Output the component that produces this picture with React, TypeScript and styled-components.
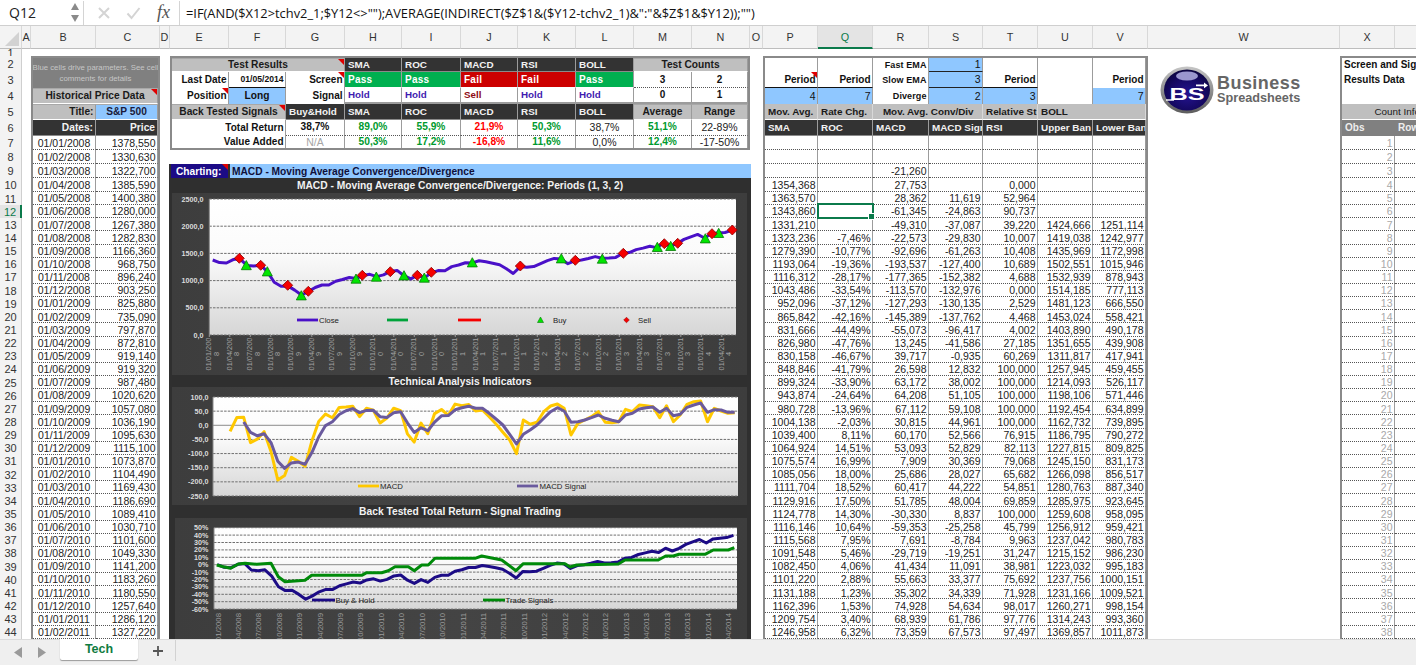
import React from 'react';
import styled, { createGlobalStyle, css } from 'styled-components';

const Global = createGlobalStyle`
  html, body { margin: 0; padding: 0; background: #fff; overflow: hidden; }
  * { box-sizing: border-box; }
`;

const FONT = `"Liberation Sans", Arial, sans-serif`;
const COLUMNS = ['A','B','C','D','E','F','G','H','I','J','K','L','M','N','O','P','Q','R','S','T','U','V','W','X','Y'];
const WIDTHS = [9,65,64,10,59,57,59,57,59,57,58,58,58,58,13,55,55,56,54,55,55,55,192,55,56];
const col = (c: string) => COLUMNS.indexOf(c) + 2;
const row = (n: number) => n + 1;

/* ---------- page frame ---------- */
const Page = styled.div`
  width: 1416px; height: 665px; display: flex; flex-direction: column; overflow: hidden; background: #fff;
  font-family: ${FONT}; color: #111;
`;
const FormulaBar = styled.div`
  height: 26px; flex: none; display: flex; align-items: center; background: #fff; border-bottom: 1px solid #cfcfcf;
`;
const NameBox = styled.div`
  width: 84px; height: 24px; flex: none; display: flex; align-items: center; justify-content: space-between;
  padding: 0 3px 0 9px; font: 14px "Open Sans", sans-serif; color: #222; border-right: 1px solid #d4d4d4;
`;
const Actions = styled.div`
  width: 96px; height: 24px; flex: none; display: flex; align-items: center; padding-left: 13px; gap: 15px;
  border-right: 1px solid #d4d4d4;
`;
const FxLabel = styled.span`
  font: italic 18px "Liberation Serif", serif; color: #555; margin-left: 1px; white-space: nowrap;
`;
const FormulaText = styled.div`
  padding-left: 6px; font: 12.85px "Open Sans", sans-serif; color: #111; white-space: nowrap;
`;
const Sheet = styled.div`
  flex: none; height: 613px; overflow: hidden; display: grid;
  grid-template-columns: 22px ${WIDTHS.map(w => w + 'px').join(' ')};
  grid-template-rows: 23px 7px repeat(5, 16px) repeat(4, 14px) repeat(34, 13.15px);
`;

/* ---------- headers ---------- */
const CornerCell = styled.div`
  grid-column: 1; grid-row: 1; background: #f3f3f3; border-bottom: 1px solid #bdbdbd; border-right: 1px solid #d8d8d8;
  display: flex; align-items: flex-end; justify-content: flex-end;
`;
const CornerMark = styled.span`
  width: 0; height: 0; border-style: solid; border-width: 0 0 14px 14px; margin: 0 2px 2px 0;
  border-color: transparent transparent #d2d2d2 transparent;
`;
const ColHead = styled.div<{ $c: number; $on?: boolean }>`
  grid-column: ${p => p.$c}; grid-row: 1; display: flex; align-items: center; justify-content: center;
  font-size: 10.8px; color: ${p => (p.$on ? '#0b7a4b' : '#333')}; background: ${p => (p.$on ? '#e4e4e4' : '#f3f3f3')};
  border-right: 1px solid #d8d8d8;
  border-bottom: ${p => (p.$on ? '2px solid #0b7a4b' : '1px solid #bdbdbd')};
`;
const RowHead = styled.div<{ $r: number; $on?: boolean }>`
  grid-column: 1; grid-row: ${p => p.$r}; display: flex; align-items: center; justify-content: center; overflow: hidden;
  font-size: 11px; color: ${p => (p.$on ? '#0b7a4b' : '#333')}; background: ${p => (p.$on ? '#e4e4e4' : '#f3f3f3')};
  border-right: ${p => (p.$on ? '2px solid #0b7a4b' : '1px solid #cfcfcf')};
`;

/* ---------- blocks ---------- */
const Block = styled.div<{ $from: string; $to: string; $r1: number; $r2: number; $open?: boolean }>`
  grid-column: ${p => col(p.$from)} / ${p => col(p.$to) + 1};
  grid-row: ${p => row(p.$r1)} / ${p => row(p.$r2) + 1};
  display: grid; grid-template-columns: subgrid; grid-template-rows: subgrid;
  border: 2px solid #8a8a8a; ${p => p.$open && 'border-bottom: none;'}
`;
const OpenBlock = styled(Block)`
  border-right: none;
`;

/* ---------- cells ---------- */
type CellProps = { $span?: number; $rows?: number; $a?: 'left' | 'center' | 'right' };
const Cell = styled.div<CellProps>`
  grid-column: span ${p => p.$span ?? 1}; grid-row: span ${p => p.$rows ?? 1};
  position: relative; min-width: 0; overflow: hidden; white-space: nowrap; display: flex; align-items: center;
  padding: 0 1.5px; font-size: 10.5px; line-height: 1;
  justify-content: ${p => (p.$a === 'center' ? 'center' : p.$a === 'left' ? 'flex-start' : 'flex-end')};
  border-right: 1px solid #9c9c9c;
`;
const Note = styled(Cell)`
  background: #808080; color: #c6c6c6; font-size: 7.8px; line-height: 11px; text-align: center;
  justify-content: center; padding: 0; border-right: none;
`;
const Band = styled(Cell)`
  background: #bfbfbf; font-weight: 700; font-size: 10.2px; color: #1a1a1a; border-bottom: 1px solid #fff; border-top: 1px solid #a8a8a8;
`;
const BlueBand = styled(Cell)`
  background: #8fc7ff; font-weight: 700; font-size: 10.2px; color: #1a1a3a; border-top: 1px solid #a8a8a8; border-bottom: 1px solid #fff;
`;
const DarkHead = styled(Cell)`
  background: #333; color: #f2f2f2; font-weight: 700; font-size: 9.9px; padding: 1px 0 0 3px; border-bottom: 1px solid #8a8a8a;
`;
const DarkHeadRight = styled(DarkHead)`
  padding: 1px 2px 0 0; font-size: 10.2px;
`;
const LabelCell = styled(Cell)`
  font-weight: 700; font-size: 10px; background: #fff;
`;
const LabelTight = styled(LabelCell)`
  font-size: 9px; letter-spacing: .1px;
`;
const DateValue = styled(Cell)`
  font-size: 8.6px; font-weight: 700; border-bottom: 1px solid #111;
`;
const ParamCell = styled(Cell)<{ $bold?: boolean; $under?: boolean }>`
  background: #8fc7ff; ${p => p.$bold && 'font-weight: 700; font-size: 10.2px;'}
  ${p => p.$under && 'border-bottom: 1px solid #222;'}
`;
const PeriodLabel = styled(LabelCell)`
  border-bottom: 1px solid #111;
`;
const Blank = styled(Cell)<{ $under?: boolean }>`
  background: #fff; ${p => p.$under && 'border-bottom: 1px dotted #555;'}
`;
const Status = styled(Cell)<{ $pass: boolean }>`
  background: ${p => (p.$pass ? '#00b050' : '#cc0000')}; color: #fff; font-weight: 700; font-size: 10px; letter-spacing: .25px;
  justify-content: flex-start; padding-left: 3px; border-bottom: 1px solid #fff;
`;
const SignalText = styled(Cell)<{ $sell?: boolean }>`
  color: ${p => (p.$sell ? '#8f0a14' : '#3f1cb0')}; font-weight: 700; font-size: 9.8px; justify-content: flex-start; padding-left: 3px;
  border-bottom: 2px solid #9c9c9c;
`;
const CountCell = styled(Cell)<{ $rule?: boolean }>`
  font-weight: 700; font-size: 10px; justify-content: center;
  ${p => (p.$rule ? 'border-bottom: 1px dotted #555;' : 'border-bottom: 2px solid #9c9c9c;')}
`;
const Result = styled(Cell)<{ $tone: 'plus' | 'minus' | 'flat' | 'mute' | 'strong'; $rule?: boolean }>`
  justify-content: center;
  ${p => p.$rule && 'border-bottom: 1px dotted #555;'}
  ${p => p.$tone === 'plus' && css`color: #009a2e; font-weight: 700; font-size: 10.2px;`}
  ${p => p.$tone === 'minus' && css`color: #f00; font-weight: 700; font-size: 10.2px;`}
  ${p => p.$tone === 'flat' && css`color: #222;`}
  ${p => p.$tone === 'mute' && css`color: #a6a6a6;`}
  ${p => p.$tone === 'strong' && css`color: #111; font-weight: 700; font-size: 10.2px;`}
`;
const DataCell = styled(Cell)`
  border-bottom: 1px dotted #555; color: #222; padding-top: 1px;
`;
const GreyHead = styled(Cell)`
  background: #bfbfbf; font-weight: 700; font-size: 9.9px; color: #1a1a1a; justify-content: flex-start; padding-left: 3px; border-bottom: 1px solid #fff;
  border-right: 1px solid #d8d8d8;
`;
const GreyHeadCentered = styled(GreyHead)`
  justify-content: center;
`;
const GreyHeadPlain = styled(GreyHead)`
  border-right: none; font-weight: 400; justify-content: center;
`;
const MidHead = styled(Cell)`
  background: #808080; color: #eee; font-weight: 700; font-size: 10px; justify-content: flex-start; padding-left: 3px; border-right: none;
`;
const SideTitle = styled(Cell)`
  font-weight: 700; font-size: 10px; justify-content: flex-start; padding-left: 2px; border-right: none; overflow: visible;
`;
const ObsCell = styled(Cell)`
  border-bottom: 1px dotted #555; color: #a8a8a8; padding-top: 1px;
`;
const Flag = styled.span`
  position: absolute; top: 0; right: 0; width: 0; height: 0; border-style: solid; border-width: 0 6px 6px 0;
  border-color: transparent #e00000 transparent transparent;
`;
const SelectedCell = styled(DataCell)`
  overflow: visible; z-index: 3;
`;
const SelectionBox = styled.span`
  position: absolute; left: -1px; top: -2px; right: -2px; bottom: -2px; border: 2px solid #0b7a4b;
`;
const SelectionHandle = styled.span`
  position: absolute; right: -3px; bottom: -3px; width: 5px; height: 5px; background: #0b7a4b; border: 1px solid #fff;
  box-sizing: content-box;
`;

/* ---------- logo ---------- */
const LogoCell = styled.div`
  grid-column: ${col('W')}; grid-row: ${row(2)} / ${row(9)};
  display: flex; align-items: flex-start; gap: 3px; padding: 10px 0 0 12px;
`;
const LogoWords = styled.div`
  display: flex; flex-direction: column; padding-top: 9px; color: #666; font-weight: 700;
`;
const LogoBig = styled.span`
  font-size: 18px; line-height: 17px; letter-spacing: .45px;
`;
const LogoSmall = styled.span`
  font-size: 12.7px; line-height: 12px;
`;

/* ---------- chart block ---------- */
const ChartBlock = styled.div`
  grid-column: ${col('E')} / ${col('N') + 1}; grid-row: ${row(9)} / ${row(44) + 1};
  background: #2f2f2f; margin: 0 -1px; display: flex; flex-direction: column; overflow: hidden;
`;
const ChartingBar = styled.div`
  height: 14px; flex: none; display: flex; gap: 2px; padding-left: 2px; align-items: stretch; font-weight: 700; font-size: 10.2px;
  background: #2f2f2f;
`;
const ChartingTag = styled.div`
  position: relative; width: 57px; background: #1c0b86; color: #fff; display: flex; align-items: center; padding-left: 5px;
`;
const ChartingName = styled.div`
  flex: 1; background: #8fc7ff; color: #10103a; display: flex; align-items: center; padding-left: 2px;
`;
const ChartTitle = styled.div<{ $h: number }>`
  height: ${p => p.$h}px; flex: none; display: flex; align-items: center; justify-content: center;
  color: #f2f2f2; font-weight: 700; font-size: 10.25px;
`;
const ChartPanel = styled.div<{ $h: number; $left: number }>`
  height: ${p => p.$h}px; flex: none; margin: 0 4px 0 ${p => p.$left}px; background: linear-gradient(90deg, #3d3d3d, #444 50%, #3d3d3d);
`;
const ChartSvg = styled.svg`
  display: block; width: 100%; height: 100%; font-family: ${FONT};
`;

/* ---------- tab bar ---------- */
const TabBar = styled.div`
  flex: 1; display: flex; align-items: flex-start; background: #efefef; border-top: 1px solid #dcdcdc;
`;
const Nav = styled.div`
  width: 60px; height: 25px; flex: none; display: flex; align-items: center; gap: 14px; padding-left: 14px;
`;
const SheetTab = styled.div`
  width: 78px; height: 21px; flex: none; margin-top: -1px; background: #fff; color: #107c41; font-weight: 700; font-size: 12.5px;
  display: flex; align-items: center; justify-content: center; border-radius: 0 0 2px 2px;
  box-shadow: 0 1px 1px #9a9a9a; padding-bottom: 2px;
`;
const AddTab = styled.div`
  width: 38px; height: 21px; flex: none; display: flex; align-items: center; justify-content: center;
  border-right: 1px solid #d2d2d2; padding-left: 2px;
`;

/* ---------- data ---------- */
const prices = ['1378,550','1330,630','1322,700','1385,590','1400,380','1280,000','1267,380','1282,830','1166,360','968,750','896,240','903,250','825,880','735,090','797,870','872,810','919,140','919,320','987,480','1020,620','1057,080','1036,190','1095,630','1115,100','1073,870','1104,490','1169,430','1186,690','1089,410','1030,710','1101,600','1049,330','1141,200','1183,260','1180,550','1257,640','1286,120','1327,220'];
const laterPrices = [1325.83,1363.61,1345.2,1320.64,1292.28,1218.89,1131.42,1253.3,1246.96,1257.6,1312.41,1365.68,1408.47,1397.91,1310.33,1362.16,1379.32,1406.58,1440.67,1412.16,1416.18,1426.19,1498.11,1514.68,1569.19,1597.57,1630.74,1606.28,1685.73,1632.97,1681.55,1756.54,1805.81,1848.36,1782.59,1859.45,1872.34,1883.95,1923.57];
const num = (s: string) => parseFloat(s.replace(',', '.'));
const closes = [...prices.map(num), ...laterPrices];

const dates = prices.map((_, i) => {
  const y = 2008 + Math.floor(i / 12);
  const m = String((i % 12) + 1).padStart(2, '0');
  return `01/${m}/${y}`;
});

const table: string[][] = [
  ['','','','','','',''],
  ['','','','','','',''],
  ['','','-21,260','','','',''],
  ['1354,368','','27,753','','0,000','',''],
  ['1363,570','','28,362','11,619','52,964','',''],
  ['1343,860','','-61,345','-24,863','90,737','',''],
  ['1331,210','','-49,310','-37,087','39,220','1424,666','1251,114'],
  ['1323,236','-7,46%','-22,573','-29,830','10,007','1419,038','1242,977'],
  ['1279,390','-10,77%','-92,696','-61,263','10,408','1435,969','1172,998'],
  ['1193,064','-19,36%','-193,537','-127,400','10,689','1502,551','1015,946'],
  ['1116,312','-28,17%','-177,365','-152,382','4,688','1532,939','878,943'],
  ['1043,486','-33,54%','-113,570','-132,976','0,000','1514,185','777,113'],
  ['952,096','-37,12%','-127,293','-130,135','2,529','1481,123','666,550'],
  ['865,842','-42,16%','-145,389','-137,762','4,468','1453,024','558,421'],
  ['831,666','-44,49%','-55,073','-96,417','4,002','1403,890','490,178'],
  ['826,980','-47,76%','13,245','-41,586','27,185','1351,655','439,908'],
  ['830,158','-46,67%','39,717','-0,935','60,269','1311,817','417,941'],
  ['848,846','-41,79%','26,598','12,832','100,000','1257,945','459,455'],
  ['899,324','-33,90%','63,172','38,002','100,000','1214,093','526,117'],
  ['943,874','-24,64%','64,208','51,105','100,000','1198,106','571,446'],
  ['980,728','-13,96%','67,112','59,108','100,000','1192,454','634,899'],
  ['1004,138','-2,03%','30,815','44,961','100,000','1162,732','739,895'],
  ['1039,400','8,11%','60,170','52,566','76,915','1186,795','790,272'],
  ['1064,924','14,51%','53,093','52,829','82,113','1227,815','809,825'],
  ['1075,574','16,99%','7,909','30,369','79,068','1245,150','831,173'],
  ['1085,056','18,00%','25,686','28,027','65,682','1266,098','856,517'],
  ['1111,704','18,52%','60,417','44,222','54,851','1280,763','887,340'],
  ['1129,916','17,50%','51,785','48,004','69,859','1285,975','923,645'],
  ['1124,778','14,30%','-30,330','8,837','100,000','1259,608','958,095'],
  ['1116,146','10,64%','-59,353','-25,258','45,799','1256,912','959,421'],
  ['1115,568','7,95%','7,691','-8,784','9,963','1237,042','980,783'],
  ['1091,548','5,46%','-29,719','-19,251','31,247','1215,152','986,230'],
  ['1082,450','4,06%','41,434','11,091','38,981','1223,032','995,183'],
  ['1101,220','2,88%','55,663','33,377','75,692','1237,756','1000,151'],
  ['1131,188','1,23%','35,302','34,339','71,928','1231,166','1009,521'],
  ['1162,396','1,53%','74,928','54,634','98,017','1260,271','998,154'],
  ['1209,754','3,40%','68,939','61,786','97,776','1314,243','993,360'],
  ['1246,958','6,32%','73,359','67,573','97,497','1369,857','1011,873'],
];

const macdLater = [108,105,125,147,172,195,236,135,148,142,110,93,87,100,180,145,135,125,110,142,143,140,103,110,90,92,95,128,92,140,120,88,80,78,140,100,108,115,113];
const signalLater = [100,100,115,132,150,178,207,178,165,150,130,110,98,108,142,140,135,128,120,130,136,140,120,115,102,98,96,112,100,122,118,97,90,84,112,104,105,112,112];

const sells: [number, number][] = [[239.3,258.3],[260.7,265.3],[287.7,285.3],[308.3,291.3],[362.3,275.3],[390.3,271.7],[417.3,275.3],[431.3,272.3],[520.3,266],[575.3,260.3],[623.3,253.3],[664.3,243.7],[677.7,243.3],[712,233.7],[732.3,230]];
const buys: [number, number][] = [[246.3,265.5],[267.3,271.7],[301.3,295.7],[356,279],[376.3,277],[404,275.7],[424.3,278],[472.3,262.7],[561.3,258.7],[602.3,259],[657.3,247.3],[670.7,246.3],[705.3,238.7],[718.7,233.3]];

const green3A: [number, number][] = [[155,180],[175,185],[197,190],[220,177],[240,175],[275,178],[318,175],[340,215],[360,230],[420,226],[440,211],[590,211],[605,203],[650,203],[670,197],[690,185],[730,185],[748,197],[770,180],[790,180],[810,160]];
const green3B: [number, number][] = [[0,160],[60,160],[80,153],[140,165],[183,197],[205,176],[330,176],[345,186],[365,180],[490,177],[510,165],[610,165],[632,153],[655,153],[672,148],[750,148],[775,135],[820,135],[838,128]];

const ticks = Array.from({ length: 26 }, (_, i) => {
  const total = i * 3;
  const y = 2008 + Math.floor(total / 12);
  const m = String((total % 12) + 1).padStart(2, '0');
  return { m, y: String(y) };
});

const line = (pts: [number, number][]) => pts.map(p => `${p[0].toFixed(1)},${p[1].toFixed(1)}`).join(' ');

/* ---------- drawings ---------- */
function Plot({ id, x, y, w, h }: { id: string; x: number; y: number; w: number; h: number }) {
  return (
    <>
      <defs>
        <linearGradient id={id} x1="0" y1="0" x2="0" y2="1">
          <stop offset="0" stopColor="#fff" />
          <stop offset=".4" stopColor="#fbfbfb" />
          <stop offset="1" stopColor="#d6d6d6" />
        </linearGradient>
      </defs>
      <rect x={x} y={y} width={w} height={h} fill={`url(#${id})`} />
    </>
  );
}

const AXIS = { fill: '#dcdcdc', fontSize: 7.2, fontWeight: 700 } as const;
const LEGEND = { fill: '#222', fontSize: 7.8 } as const;
const GRID = { stroke: '#6f6f6f', strokeWidth: 1, strokeDasharray: '2.5 1.2' } as const;

function PriceChart() {
  const X0 = 209.3, X1 = 736, T = 199, B = 335;
  const pts = closes.map((c, i) => [X0 + (i + 0.5) * 6.83, B - (c / 2500) * 136] as [number, number]);
  const labels = ['2500,0','2000,0','1500,0','1000,0','500,0','0,0'];
  return (
    <ChartSvg viewBox="172 193 575 182">
      <Plot id="p1" x={X0} y={T} w={X1 - X0} h={B - T} />
      {labels.map((l, i) => {
        const y = T + (i * (B - T)) / 5;
        return (
          <g key={l}>
            <line x1={X0} x2={X1} y1={y} y2={y} {...GRID} />
            <text x={203.5} y={y + 2.5} textAnchor="end" {...AXIS}>{l}</text>
          </g>
        );
      })}
      <line x1={X0} x2={X0} y1={T} y2={B} stroke="#8a8a8a" />
      {ticks.map((t, i) => {
        const x = X0 + i * 20.5;
        return (
          <g key={i} fill="#a4a4a4" fontSize={7.4}>
            <line x1={x} x2={x} y1={B} y2={B + 2} stroke="#999" />
            <text transform={`rotate(-90 ${x + 1.8} 354)`} x={x + 1.8} y={354} textAnchor="middle">{`01/${t.m}/${t.y.slice(0, 3)}`}</text>
            <text transform={`rotate(-90 ${x + 9.5} 354)`} x={x + 9.5} y={354} textAnchor="middle">{t.y.slice(3)}</text>
          </g>
        );
      })}
      <polyline points={line(pts)} fill="none" stroke="#4a10c8" strokeWidth={3} strokeLinejoin="round" />
      {buys.map(([x, y], i) => (
        <polygon key={i} points={`${x},${y - 5} ${x + 5},${y + 4.2} ${x - 5},${y + 4.2}`} fill="#00e600" stroke="#067a06" strokeWidth={.8} />
      ))}
      {sells.map(([x, y], i) => (
        <polygon key={i} points={`${x},${y - 5} ${x + 5},${y} ${x},${y + 5} ${x - 5},${y}`} fill="#f50000" stroke="#8a0000" strokeWidth={.8} />
      ))}
      <line x1={297} x2={318} y1={320} y2={320} stroke="#4a10c8" strokeWidth={2.8} />
      <text x={319} y={323} {...LEGEND}>Close</text>
      <line x1={387} x2={408} y1={320} y2={320} stroke="#00a33a" strokeWidth={2.8} />
      <line x1={458} x2={481} y1={320} y2={320} stroke="#f50000" strokeWidth={2.8} />
      <polygon points="540.5,317 543.5,322.5 537.5,322.5" fill="#00e600" stroke="#067a06" strokeWidth={.6} />
      <text x={553} y={323} {...LEGEND}>Buy</text>
      <polygon points="626.5,317.2 629.3,320 626.5,322.8 623.7,320" fill="#f50000" stroke="#8a0000" strokeWidth={.5} />
      <text x={638} y={323} {...LEGEND}>Sell</text>
    </ChartSvg>
  );
}

function MacdChart() {
  const X0 = 213, X1 = 738, T = 397, B = 496;
  const toY = (v: number) => T + ((100 - v) * (B - T)) / 350;
  const toX = (i: number) => X0 + (i + 0.5) * 6.82;
  const macd: [number, number][] = [];
  const signal: [number, number][] = [];
  table.forEach((r, i) => {
    if (r[2]) macd.push([toX(i), toY(num(r[2]))]);
    if (r[3]) signal.push([toX(i), toY(num(r[3]))]);
  });
  macdLater.forEach((z, i) => macd.push([toX(i + 38), 375 + z / 3]));
  signalLater.forEach((z, i) => signal.push([toX(i + 38), 375 + z / 3]));
  const labels = [100, 50, 0, -50, -100, -150, -200, -250];
  return (
    <ChartSvg viewBox="172 387 575 118">
      <Plot id="p2" x={X0} y={T} w={X1 - X0} h={B - T} />
      {labels.map(l => {
        const y = toY(l);
        return (
          <g key={l}>
            {l === 0
              ? <line x1={X0} x2={X1} y1={y} y2={y} stroke="#8a8a8a" strokeWidth={1} />
              : <line x1={X0} x2={X1} y1={y} y2={y} {...GRID} />}
            <text x={208.5} y={y + 2.5} textAnchor="end" {...AXIS}>{`${l},0`}</text>
          </g>
        );
      })}
      <line x1={X0} x2={X0} y1={T} y2={B} stroke="#8a8a8a" />
      <polyline points={line(macd)} fill="none" stroke="#ffc800" strokeWidth={3} strokeLinejoin="round" />
      <polyline points={line(signal)} fill="none" stroke="#6a5a9e" strokeWidth={3} strokeLinejoin="round" />
      <line x1={358} x2={379} y1={486} y2={486} stroke="#ffc800" strokeWidth={2.8} />
      <text x={380} y={489} {...LEGEND}>MACD</text>
      <line x1={517} x2={538} y1={486} y2={486} stroke="#6a5a9e" strokeWidth={2.8} />
      <text x={539.5} y={489} {...LEGEND}>MACD Signal</text>
    </ChartSvg>
  );
}

function ReturnChart() {
  const X0 = 214, X1 = 737, T = 527.7, STEP = 7.4;
  const zero = T + 5 * STEP;
  const blue = closes.map((c, i) => [X0 + (i + 0.5) * 6.79, zero - (c / 1378.55 - 1) * 74] as [number, number]);
  const green: [number, number][] = [
    ...green3A.map(([x, y]) => [165 + x / 3, 505 + y / 3] as [number, number]),
    ...green3B.map(([x, y]) => [455 + x / 3, 505 + y / 3] as [number, number]),
  ];
  const labels = [50, 40, 30, 20, 10, 0, -10, -20, -30, -40, -50, -60];
  return (
    <ChartSvg viewBox="175 518 572 150">
      <Plot id="p3" x={X0} y={T} w={X1 - X0} h={11 * STEP} />
      {labels.map((l, i) => {
        const y = T + i * STEP;
        return (
          <g key={l}>
            {l === 0
              ? <line x1={X0} x2={X1} y1={y} y2={y} stroke="#8a8a8a" strokeWidth={1} />
              : <line x1={X0} x2={X1} y1={y} y2={y} {...GRID} />}
            <text x={208.5} y={y + 2.5} textAnchor="end" {...AXIS}>{`${l}%`}</text>
          </g>
        );
      })}
      <line x1={X0} x2={X0} y1={T} y2={T + 11 * STEP} stroke="#8a8a8a" />
      {ticks.map((t, i) => {
        const x = 220.5 + i * 20.42;
        return <text key={i} transform={`rotate(-90 ${x} 613)`} x={x} y={613} textAnchor="end" fill="#9c9c9c" fontSize={7.8}>{`01/${t.m}/${t.y}`}</text>;
      })}
      <polyline points={line(blue)} fill="none" stroke="#1c0b86" strokeWidth={3} strokeLinejoin="round" />
      <polyline points={line(green)} fill="none" stroke="#008a0a" strokeWidth={3} strokeLinejoin="round" />
      <line x1={312} x2={335} y1={600} y2={600} stroke="#1c0b86" strokeWidth={2.8} />
      <text x={335.5} y={603} {...LEGEND}>Buy &amp; Hold</text>
      <line x1={483} x2={505} y1={600} y2={600} stroke="#008a0a" strokeWidth={2.8} />
      <text x={505.5} y={603} {...LEGEND}>Trade Signals</text>
    </ChartSvg>
  );
}

function Logo() {
  return (
    <svg width="54" height="48" viewBox="0 0 54 48">
      <defs>
        <radialGradient id="orb" cx=".5" cy=".6" r=".6">
          <stop offset="0" stopColor="#241491" />
          <stop offset=".7" stopColor="#14085f" />
          <stop offset="1" stopColor="#0c0640" />
        </radialGradient>
        <linearGradient id="ring" x1="0" y1="0" x2="0" y2="1">
          <stop offset="0" stopColor="#c6c6c6" />
          <stop offset="1" stopColor="#5c5c5c" />
        </linearGradient>
      </defs>
      <ellipse cx="27" cy="24" rx="26.5" ry="23.5" fill="url(#ring)" />
      <ellipse cx="27" cy="24" rx="23" ry="20.5" fill="url(#orb)" />
      <ellipse cx="27" cy="10" rx="11" ry="4.5" fill="#9a97cf" />
      <text x="27" y="34" textAnchor="middle" fontFamily={FONT} fontSize="17" fontWeight="700" fill="#fff" textLength="35" lengthAdjust="spacingAndGlyphs">BS</text>
      <path d="M36 18.5h8v-2l4 2.9-4 2.9v-2h-8z" fill="#fff" />
      <path d="M6 34h8" stroke="#fff" strokeWidth="1.4" />
    </svg>
  );
}

const Tri = ({ up }: { up: boolean }) => (
  <svg width="10" height="9" viewBox="0 0 10 9"><path d={up ? 'M5 1l4 7H1z' : 'M5 8L1 1h8z'} fill="#8a8a8a" /></svg>
);

const Stepper = styled.div`
  display: flex; flex-direction: column; gap: 3px;
`;

const App = () => {
  const pct = [
    { t: 'Total Return', v: ['89,0%','55,9%','21,9%','50,3%','38,7%'], tone: ['plus','plus','minus','plus','flat'] },
    { t: 'Value Added', v: ['50,3%','17,2%','-16,8%','11,6%','0,0%'], tone: ['plus','plus','minus','plus','flat'] },
  ] as const;
  return (
    <Page>
      <Global />
      <FormulaBar>
        <NameBox>
          Q12
          <Stepper><Tri up /><Tri up={false} /></Stepper>
        </NameBox>
        <Actions>
          <svg width="14" height="14" viewBox="0 0 14 14"><path d="M2 2l10 10M12 2L2 12" stroke="#d4d4d4" strokeWidth="2" /></svg>
          <svg width="15" height="14" viewBox="0 0 15 14"><path d="M1.5 7.5l4 4.5 8-10" fill="none" stroke="#d4d4d4" strokeWidth="2" /></svg>
          <FxLabel>fx</FxLabel>
        </Actions>
        <FormulaText>{'=IF(AND($X12>tchv2_1;$Y12<>"");AVERAGE(INDIRECT($Z$1&($Y12-tchv2_1)&":"&$Z$1&$Y12));"")'}</FormulaText>
      </FormulaBar>

      <Sheet>
        <CornerCell><CornerMark /></CornerCell>
        {COLUMNS.map(c => <ColHead key={c} $c={col(c)} $on={c === 'Q'}>{c}</ColHead>)}
        {Array.from({ length: 44 }, (_, i) => (
          <RowHead key={i} $r={row(i + 1)} $on={i + 1 === 12}>{i + 1}</RowHead>
        ))}

        <Block $from="B" $to="C" $r1={2} $r2={44} $open>
          <Note $span={2} $rows={2}><span>Blue cells drive parameters. See cell<br />comments for details</span></Note>
          <Band $span={2} $a="center">Historical Price Data<Flag /></Band>
          <Band>Title:</Band>
          <BlueBand $a="center">S&amp;P 500</BlueBand>
          <DarkHeadRight>Dates:</DarkHeadRight>
          <DarkHeadRight>Price</DarkHeadRight>
          {prices.map((p, i) => (
            <React.Fragment key={p}>
              <DataCell $a="center">{dates[i]}</DataCell>
              <DataCell>{p}</DataCell>
            </React.Fragment>
          ))}
        </Block>

        <Block $from="E" $to="N" $r1={2} $r2={7}>
          <Band $span={3} $a="center">Test Results<Flag /></Band>
          {['SMA','ROC','MACD','RSI','BOLL'].map(h => <DarkHead key={h} $a="left">{h}</DarkHead>)}
          <Band $span={2} $a="center">Test Counts</Band>

          <LabelCell>Last Date</LabelCell>
          <DateValue>01/05/2014</DateValue>
          <LabelCell>Screen<Flag /></LabelCell>
          <Status $pass>Pass</Status>
          <Status $pass>Pass</Status>
          <Status $pass={false}>Fail</Status>
          <Status $pass={false}>Fail</Status>
          <Status $pass>Pass</Status>
          <CountCell $rule>3</CountCell>
          <CountCell $rule>2</CountCell>

          <LabelCell>Position<Flag /></LabelCell>
          <ParamCell $a="center" $bold>Long</ParamCell>
          <LabelCell>Signal</LabelCell>
          <SignalText>Hold</SignalText>
          <SignalText>Hold</SignalText>
          <SignalText $sell>Sell</SignalText>
          <SignalText>Hold</SignalText>
          <SignalText>Hold</SignalText>
          <CountCell>0</CountCell>
          <CountCell>1</CountCell>

          <Band $span={2} $a="center">Back Tested Signals<Flag /></Band>
          <DarkHead $a="left">Buy&amp;Hold</DarkHead>
          {['SMA','ROC','MACD','RSI','BOLL'].map(h => <DarkHead key={h} $a="left">{h}</DarkHead>)}
          <Band $a="center">Average</Band>
          <Band $a="center">Range</Band>

          <LabelCell $span={2}>{pct[0].t}</LabelCell>
          <Result $tone="strong" $rule>38,7%</Result>
          {pct[0].v.map((v, i) => <Result key={v} $tone={pct[0].tone[i]} $rule>{v}</Result>)}
          <Result $tone="plus" $rule>51,1%</Result>
          <Result $tone="flat" $rule>22-89%</Result>

          <LabelCell $span={2}>{pct[1].t}</LabelCell>
          <Result $tone="mute">N/A</Result>
          {pct[1].v.map((v, i) => <Result key={v} $tone={pct[1].tone[i]}>{v}</Result>)}
          <Result $tone="plus">12,4%</Result>
          <Result $tone="flat">-17-50%</Result>
        </Block>

        <ChartBlock>
          <ChartingBar>
            <ChartingTag>Charting:<Flag /></ChartingTag>
            <ChartingName>MACD - Moving Average Convergence/Divergence</ChartingName>
          </ChartingBar>
          <ChartTitle $h={15}>MACD - Moving Average Convergence/Divergence: Periods (1, 3, 2)</ChartTitle>
          <ChartPanel $h={182} $left={3}><PriceChart /></ChartPanel>
          <ChartTitle $h={12}>Technical Analysis Indicators</ChartTitle>
          <ChartPanel $h={118} $left={3}><MacdChart /></ChartPanel>
          <ChartTitle $h={13}>Back Tested Total Return - Signal Trading</ChartTitle>
          <ChartPanel $h={150} $left={6}><ReturnChart /></ChartPanel>
        </ChartBlock>

        <Block $from="P" $to="V" $r1={2} $r2={44} $open>
          <Blank /><Blank />
          <LabelTight>Fast EMA</LabelTight>
          <ParamCell $under>1</ParamCell>
          <Blank /><Blank /><Blank />

          <PeriodLabel>Period<Flag /></PeriodLabel>
          <PeriodLabel>Period</PeriodLabel>
          <LabelTight>Slow EMA</LabelTight>
          <ParamCell $under>3</ParamCell>
          <PeriodLabel>Period</PeriodLabel>
          <Blank />
          <LabelCell>Period</LabelCell>

          <ParamCell>4</ParamCell>
          <ParamCell>7</ParamCell>
          <LabelTight>Diverge</LabelTight>
          <ParamCell>2</ParamCell>
          <ParamCell>3</ParamCell>
          <Blank />
          <ParamCell>7</ParamCell>

          <GreyHead>Mov. Avg.</GreyHead>
          <GreyHead>Rate Chg.</GreyHead>
          <GreyHeadCentered $span={2}>Mov. Avg. Conv/Div</GreyHeadCentered>
          <GreyHead>Relative St</GreyHead>
          <GreyHead $span={2}>BOLL</GreyHead>

          {['SMA','ROC','MACD','MACD Sign','RSI','Upper Ban','Lower Ban'].map(h => (
            <DarkHead key={h} $a="left">{h}</DarkHead>
          ))}

          {table.map((r, ri) => r.map((v, ci) =>
            ri === 5 && ci === 1
              ? <SelectedCell key={`${ri}-${ci}`}><SelectionBox /><SelectionHandle /></SelectedCell>
              : <DataCell key={`${ri}-${ci}`}>{v}</DataCell>
          ))}
        </Block>

        <LogoCell>
          <Logo />
          <LogoWords>
            <LogoBig>Business</LogoBig>
            <LogoSmall>Spreadsheets</LogoSmall>
          </LogoWords>
        </LogoCell>

        <OpenBlock $from="X" $to="Y" $r1={2} $r2={44} $open>
          <SideTitle $span={2}>Screen and Signal</SideTitle>
          <SideTitle $span={2}>Results Data</SideTitle>
          <Blank $span={2} />
          <GreyHeadPlain $span={2}>Count Info</GreyHeadPlain>
          <MidHead>Obs</MidHead>
          <MidHead>Row</MidHead>
          {prices.map((_, i) => (
            <React.Fragment key={i}>
              <ObsCell>{i + 1}</ObsCell>
              <Blank $under />
            </React.Fragment>
          ))}
        </OpenBlock>
      </Sheet>

      <TabBar>
        <Nav>
          <svg width="9" height="11" viewBox="0 0 9 11"><path d="M8 0v11L0 5.5z" fill="#9a9a9a" /></svg>
          <svg width="9" height="11" viewBox="0 0 9 11"><path d="M1 0v11l8-5.5z" fill="#9a9a9a" /></svg>
        </Nav>
        <SheetTab>Tech</SheetTab>
        <AddTab>
          <svg width="12" height="12" viewBox="0 0 12 12"><path d="M6 1v10M1 6h10" stroke="#555" strokeWidth="1.8" /></svg>
        </AddTab>
      </TabBar>
    </Page>
  );
};

export default App;
